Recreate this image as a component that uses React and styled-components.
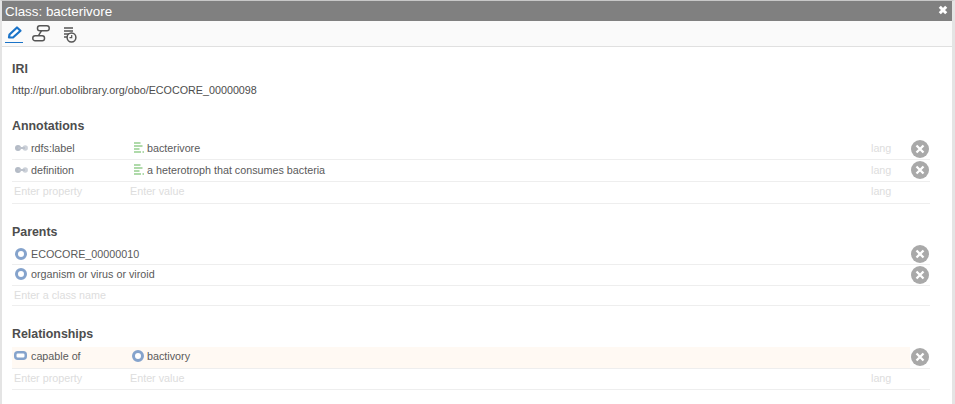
import React from "react";
import styled, { createGlobalStyle } from "styled-components";

const GlobalStyle = createGlobalStyle`
  html, body {
    margin: 0;
    padding: 0;
    background: #fff;
    overflow: hidden;
  }
  body {
    font-family: "Liberation Sans", Arial, sans-serif;
    font-size: 10.75px;
    color: #5a5a5a;
  }
`;

const Frame = styled.div`
  width: 955px;
  height: 404px;
  box-sizing: border-box;
  border-left: 2px solid #e4e4e4;
  border-right: 3px solid #e4e4e4;
  border-top: 1px solid #c8c8c8;
  overflow: hidden;
  background: #fff;
`;

const TitleBar = styled.div`
  height: 20px;
  background: #808080;
  color: #fff;
  display: flex;
  align-items: center;
  justify-content: space-between;
  padding: 0 4px 0 3px;
  font-size: 13.4px;
`;

const Toolbar = styled.div`
  height: 26px;
  box-sizing: border-box;
  background: #fafafa;
  border-bottom: 1px solid #e0e0e0;
  display: flex;
  align-items: flex-start;
  gap: 9px;
  padding: 2px 0 0 3px;
`;

const Tab = styled.div`
  width: ${(p) => p.$w || 18}px;
  height: 19px;
  display: flex;
  justify-content: center;
  align-items: flex-start;
  border-bottom: 1px solid ${(p) => (p.$active ? "#1a73c8" : "transparent")};
`;

const Body = styled.div`
  padding: 13px 22px 0 10px;
`;

const Section = styled.section`
  margin-bottom: ${(p) => p.$gap || 19}px;
`;

const Heading = styled.h4`
  margin: 0;
  height: 15px;
  padding-top: 1px;
  font-size: 12.4px;
  line-height: 16px;
  font-weight: bold;
  color: #4d4d4d;
`;

const IriText = styled.div`
  margin-top: 7px;
  line-height: 14px;
  color: #4d4d4d;
`;

const Rows = styled.div`
  margin-top: ${(p) => p.$top || 4}px;
`;

const Row = styled.div`
  position: relative;
  height: ${(p) => p.$h || 21}px;
  padding-bottom: ${(p) => p.$pb || 0}px;
  display: flex;
  align-items: center;
  border-bottom: 1px solid #eeeeee;
  background: ${(p) => (p.$tint ? "linear-gradient(to right, #fff9f3 0, #fff9f3 898px, #fff 898px)" : "transparent")};
`;

const PropCell = styled.div`
  width: ${(p) => (p.$auto ? "auto" : "117px")};
  padding-left: ${(p) => p.$pl ?? 3}px;
  box-sizing: border-box;
  display: flex;
  align-items: center;
  gap: ${(p) => p.$gap || 3}px;
  flex: none;
`;

const ValueCell = styled.div`
  flex: 1;
  display: flex;
  align-items: center;
  gap: 3px;
  padding-left: ${(p) => p.$pad ?? 5}px;
`;

const Placeholder = styled.span`
  color: #dddddd;
  padding-left: 2px;
  ${(p) => p.$w && `width: ${p.$w}px; flex: none; box-sizing: border-box;`}
  ${(p) => p.$grow && "flex: 1;"}
`;

const Lang = styled.span`
  color: #dddddd;
  width: 59px;
  flex: none;
`;

const Remove = styled.span`
  position: absolute;
  right: 1px;
  top: ${(p) => p.$top ?? 1}px;
  width: 18px;
  height: 18px;
  border-radius: 50%;
  background: #a9a9a9;
  display: flex;
  align-items: center;
  justify-content: center;
`;

const CloseWrap = styled.span`
  display: flex;
  align-self: flex-start;
  margin-top: 4px;
`;

const Pencil = () => (
  <svg width="18" height="19" viewBox="0 0 18 19">
    <path d="M4.500 11.500 12 4.500l3.500 3.200L8 14.500H4z" fill="#fff" stroke="#1a73c8" strokeWidth="2.200" strokeLinejoin="round" />
  </svg>
);

const Path = () => (
  <svg width="18" height="19" viewBox="0 0 18 19">
    <rect x="5.500" y="2.700" width="11.700" height="5" rx="2.300" fill="none" stroke="#555" strokeWidth="1.500" />
    <rect x="0.800" y="12.700" width="11.700" height="5" rx="2.300" fill="none" stroke="#555" strokeWidth="1.500" />
    <path d="M9.500 7.700 6.500 12.700" stroke="#555" strokeWidth="1.500" />
  </svg>
);

const History = () => (
  <svg width="16" height="20" viewBox="0 0 16 20">
    <path d="M2 5h9M2 8h9M2 11h5M2 14h3" stroke="#555" strokeWidth="1.300" />
    <circle cx="9.500" cy="14.500" r="4.400" fill="#fafafa" stroke="#555" strokeWidth="1.500" />
    <path d="M9.700 12v2.700H7.500" fill="none" stroke="#555" strokeWidth="1.200" />
  </svg>
);

const Close = () => (
  <CloseWrap>
    <svg width="10" height="10" viewBox="0 0 10 10">
      <path d="M1.800 1.800l6.400 6.400M8.200 1.800l-6.400 6.400" stroke="#fff" strokeWidth="3" />
    </svg>
  </CloseWrap>
);

const RemoveIcon = ({ top }) => (
  <Remove $top={top}>
    <svg width="10" height="10" viewBox="0 0 10 10">
      <path d="M1.500 1.500l7 7M8.500 1.500l-7 7" stroke="#fff" strokeWidth="2.300" />
    </svg>
  </Remove>
);

const PropIcon = () => (
  <svg width="13" height="6" viewBox="0 0 13 6">
    <circle cx="3" cy="3" r="3" fill="#b4bbc6" />
    <circle cx="10.200" cy="3" r="2.700" fill="#ccd1d9" />
    <rect x="3" y="2" width="7" height="2" fill="#bcc2cc" />
  </svg>
);

const LiteralIcon = () => (
  <svg width="10" height="11" viewBox="0 0 10 11">
    <path d="M0 1h6.500M0 4h8.500M0 7h5.500M0 10h7M8.500 10h1.500" stroke="#afdaaa" strokeWidth="2" />
  </svg>
);

const ClassIcon = () => (
  <svg width="12" height="12" viewBox="0 0 12 12">
    <circle cx="6" cy="6" r="4.500" fill="#fff" stroke="#85a3cc" strokeWidth="3" />
  </svg>
);

const ObjectPropIcon = () => (
  <svg width="13" height="9" viewBox="0 0 13 9">
    <rect x="1.250" y="1.250" width="10.500" height="6.500" rx="2.500" fill="#fff" stroke="#85a3cc" strokeWidth="2.500" />
  </svg>
);

const EntryRow = ({ h, pb, first, second }) => (
  <Row $h={h} $pb={pb}>
    <Placeholder $w={116}>{first}</Placeholder>
    <Placeholder $grow>{second}</Placeholder>
    <Lang>lang</Lang>
  </Row>
);

const annotations = [
  { prop: "rdfs:label", value: "bacterivore", top: 2 },
  { prop: "definition", value: "a heterotroph that consumes bacteria", top: 1 },
];

const parents = [
  { name: "ECOCORE_00000010", h: 21, pb: 0, top: 2 },
  { name: "organism or virus or viroid", h: 18, pb: 2, top: 1 },
];

export default function App() {
  return (
    <>
      <GlobalStyle />
      <Frame>
        <TitleBar>
          <span>Class: bacterivore</span>
          <Close />
        </TitleBar>
        <Toolbar>
          <Tab $active>
            <Pencil />
          </Tab>
          <Tab>
            <Path />
          </Tab>
          <Tab $w={22}>
            <History />
          </Tab>
        </Toolbar>
        <Body>
          <Section $gap={20}>
            <Heading>IRI</Heading>
            <IriText>http://purl.obolibrary.org/obo/ECOCORE_00000098</IriText>
          </Section>
          <Section>
            <Heading>Annotations</Heading>
            <Rows $top={5}>
              {annotations.map((a) => (
                <Row key={a.prop} $h={19} $pb={2}>
                  <PropCell>
                    <PropIcon />
                    <span>{a.prop}</span>
                  </PropCell>
                  <ValueCell>
                    <LiteralIcon />
                    <span>{a.value}</span>
                  </ValueCell>
                  <Lang>lang</Lang>
                  <RemoveIcon top={a.top} />
                </Row>
              ))}
              <EntryRow h={17} pb={4} first="Enter property" second="Enter value" />
            </Rows>
          </Section>
          <Section>
            <Heading>Parents</Heading>
            <Rows>
              {parents.map((p) => (
                <Row key={p.name} $h={p.h} $pb={p.pb}>
                  <PropCell $auto $gap={4}>
                    <ClassIcon />
                    <span>{p.name}</span>
                  </PropCell>
                  <RemoveIcon top={p.top} />
                </Row>
              ))}
              <Row $h={17} $pb={2}>
                <Placeholder>Enter a class name</Placeholder>
              </Row>
            </Rows>
          </Section>
          <Section>
            <Heading>Relationships</Heading>
            <Rows $top={6}>
              <Row $tint $h={17} $pb={4}>
                <PropCell $pl={2} $gap={4}>
                  <ObjectPropIcon />
                  <span>capable of</span>
                </PropCell>
                <ValueCell $pad={3}>
                  <ClassIcon />
                  <span>bactivory</span>
                </ValueCell>
                <RemoveIcon top={1} />
              </Row>
              <EntryRow h={17} pb={3} first="Enter property" second="Enter value" />
            </Rows>
          </Section>
        </Body>
      </Frame>
    </>
  );
}
